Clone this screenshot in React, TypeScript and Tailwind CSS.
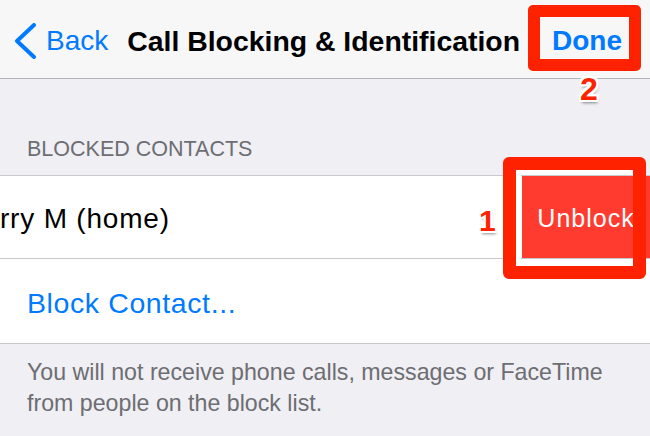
import React from "react";

const label =
  "absolute font-bold text-[#ff2200] leading-none [text-shadow:-2px_0_#fff,2px_0_#fff,0_-2px_#fff,0_2px_#fff,2px_2px_#fff,-2px_-2px_#fff,2px_-2px_#fff,-2px_2px_#fff,1px_3px_3px_rgba(0,0,0,0.45)]";

export default function App() {
  return (
    <div className="relative w-[650px] h-[436px] overflow-hidden bg-[#efeff4] font-['Liberation_Sans',Arial,sans-serif]">
      {/* Navigation bar */}
      <div className="flex h-[79px] items-center border-b border-[#b4b4b8] bg-[#f7f7f7] pt-[4px] whitespace-nowrap">
        <svg className="ml-[13px] shrink-0" width="24" height="36" viewBox="0 0 24 36">
          <polyline
            points="21,2 4,18 21,34"
            fill="none"
            stroke="#007aff"
            strokeWidth="4"
            strokeLinecap="round"
            strokeLinejoin="round"
          />
        </svg>
        <span className="ml-[9px] text-[28px] leading-[32px] text-[#007aff]">Back</span>
        <span className="ml-[19px] text-[28.4px] font-bold leading-[32px] text-black">
          Call Blocking &amp; Identification
        </span>
        <span className="ml-[32px] text-[28px] font-bold leading-[32px] text-[#007aff]">Done</span>
      </div>

      {/* Section header */}
      <div className="px-[27px] pt-[57px] pb-[13px] text-[21.5px] leading-[26px] text-[#6d6d72] whitespace-nowrap">
        BLOCKED CONTACTS
      </div>

      {/* Blocked contact row (swiped) */}
      <div className="flex border-y border-[#c8c7cc] bg-white">
        <div className="min-w-0 flex-1 pt-[27px] pb-[23px]">
          <div className="whitespace-nowrap text-[28px] leading-[32px] tracking-[0.8px] text-black">
            rry M (home)
          </div>
        </div>
        <div className="flex w-[128px] shrink-0 items-center justify-center bg-[#ff3b30] pt-[2px] text-[25px] leading-[32px] tracking-[1px] text-white">
          Unblock
        </div>
      </div>

      {/* Block contact row */}
      <div className="border-b border-[#c8c7cc] bg-white px-[27px] pt-[28px] pb-[24px]">
        <div className="whitespace-nowrap text-[28.5px] leading-[32px] tracking-[0.6px] text-[#007aff]">Block Contact...</div>
      </div>

      {/* Footer */}
      <div className="px-[27px] pt-[13px] text-[23.2px] leading-[31px] text-[#6d6d72]">
        You will not receive phone calls, messages or FaceTime from people on the block list.
      </div>

      {/* Annotations */}
      <div className="absolute left-[528px] top-[5px] h-[66px] w-[113px] rounded-[5px] border-[12px] border-[#ff2200]" />
      <div className={`${label} left-[580px] top-[73px] text-[32px]`}>2</div>

      <div className="absolute left-[503px] top-[157px] h-[122px] w-[143px] rounded-[6px] border-[13px] border-[#ff2200]">
        <div className="h-full w-full border-l-[5px] border-t-[5px] border-b-[7px] border-white" />
      </div>
      <div className={`${label} left-[479px] top-[206px] text-[30px]`}>1</div>
    </div>
  );
}
